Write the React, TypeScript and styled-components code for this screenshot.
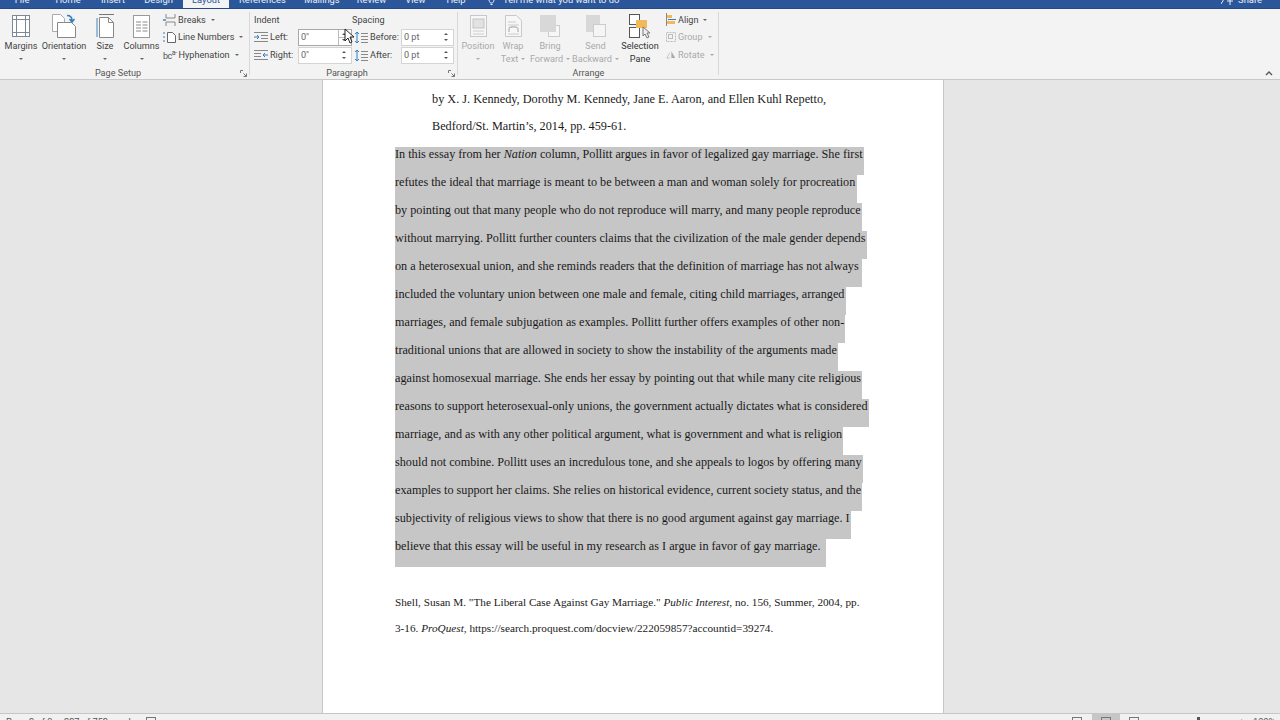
import React from "react";
import styled, { createGlobalStyle } from "styled-components";

const Global = createGlobalStyle`
  html, body { margin: 0; padding: 0; height: 100%; overflow: hidden; }
  #root { height: 100%; }
`;

const Shell = styled.div`
  display: flex;
  flex-direction: column;
  width: 1280px;
  height: 720px;
  overflow: hidden;
  position: relative;
  background: #e6e6e6;
  font-family: Roboto, "Liberation Sans", sans-serif;
`;

const TabBar = styled.div`
  display: flex;
  align-items: flex-start;
  flex: 0 0 9px;
  height: 9px;
  box-sizing: border-box;
  overflow: hidden;
  background: #2b579a;
  border-bottom: 1px solid #234a85;
  color: #e8eef7;
  font-size: 9.4px;
`;

const Tab = styled.div<{ $w: number; $active?: boolean }>`
  flex: 0 0 ${(p) => p.$w}px;
  width: ${(p) => p.$w}px;
  height: 9px;
  text-align: center;
  white-space: nowrap;
  line-height: 0;
  background: ${(p) => (p.$active ? "#f3f3f3" : "transparent")};
  color: ${(p) => (p.$active ? "#2b579a" : "#e8eef7")};
`;

const TellMe = styled.div`
  display: flex;
  gap: 8px;
  align-items: center;
  margin-left: 12px;
  height: 0;
  line-height: 0;
  white-space: nowrap;
`;

const Share = styled.div`
  margin-left: auto;
  margin-right: 18px;
  height: 0;
  line-height: 0;
  display: flex;
  gap: 3px;
  align-items: center;
`;

const Ribbon = styled.div`
  display: flex;
  flex: 0 0 71px;
  height: 71px;
  box-sizing: border-box;
  background: #f3f3f3;
  border-bottom: 1px solid #c8c8c8;
  position: relative;
  color: #444;
  font-size: 9.1px;
`;

const Group = styled.div<{ $w: number }>`
  flex: 0 0 ${(p) => p.$w}px;
  width: ${(p) => p.$w}px;
  box-sizing: border-box;
  height: 70px;
  display: flex;
  flex-direction: column;
  position: relative;
  &::after {
    content: "";
    position: absolute;
    top: 3px;
    bottom: 4px;
    right: 0;
    width: 1px;
    background: #d8d8d8;
  }
`;

const GroupBody = styled.div`
  flex: 1;
  display: flex;
  min-height: 0;
`;

const GroupLabel = styled.div<{ $pad?: number }>`
  flex: 0 0 12px;
  line-height: 12px;
  text-align: center;
  padding-right: ${(p) => p.$pad ?? 0}px;
  color: #555;
`;

const Launcher = styled.svg`
  position: absolute;
  right: 3px;
  bottom: 2px;
  width: 7px;
  height: 7px;
`;

const BigBtn = styled.div<{ $w: number; $off?: boolean; $dark?: boolean }>`
  flex: 0 0 ${(p) => p.$w}px;
  width: ${(p) => p.$w}px;
  display: flex;
  flex-direction: column;
  align-items: center;
  padding-top: 5px;
  box-sizing: border-box;
  line-height: 12.5px;
  white-space: nowrap;
  color: ${(p) => (p.$off ? "#aaa" : p.$dark ? "#333" : "#444")};
`;

const BigIcon = styled.div<{ $top?: number }>`
  height: 26px;
  box-sizing: border-box;
  padding-top: ${(p) => p.$top ?? 0}px;
  display: flex;
  align-items: flex-start;
`;

const Caret = styled.span<{ $off?: boolean }>`
  display: inline-block;
  width: 0;
  height: 0;
  border-left: 2px solid transparent;
  border-right: 2px solid transparent;
  border-top: 2px solid ${(p) => (p.$off ? "#aaa" : "#666")};
  vertical-align: middle;
  margin-left: 3px;
`;

const CaretRow = styled.div`
  height: 12px;
  display: flex;
  align-items: center;
  justify-content: center;
  & > span { margin-left: 0; }
`;

const SmallCol = styled.div<{ $pad: number }>`
  display: flex;
  flex-direction: column;
  padding: 2px 0 0 ${(p) => p.$pad}px;
`;

const SmallBtn = styled.div<{ $off?: boolean }>`
  display: flex;
  align-items: center;
  gap: 2px;
  height: 17.5px;
  white-space: nowrap;
  color: ${(p) => (p.$off ? "#aaa" : "#444")};
`;

const ParaBody = styled.div`
  flex: 1;
  display: grid;
  grid-template-columns: 98px 105px;
  grid-template-rows: 17px 18px 18px;
  padding: 2px 0 0 4px;
  align-items: center;
`;

const ParaHead = styled.div`
  color: #444;
`;

const ParaRow = styled.div<{ $labelW: number; $pad?: number }>`
  display: grid;
  grid-template-columns: 14px ${(p) => p.$labelW}px 1fr;
  column-gap: 2px;
  align-items: center;
  height: 18px;
  padding-left: ${(p) => p.$pad ?? 0}px;
`;

const Spin = styled.div<{ $w: number; $focus?: boolean }>`
  width: ${(p) => p.$w}px;
  height: 17px;
  box-sizing: border-box;
  border: 1px solid ${(p) => (p.$focus ? "#a8a8a8" : "#d4d4d4")};
  background: #fff;
  display: flex;
  align-items: center;
  justify-content: space-between;
  padding-left: 2px;
  padding-right: 2px;
  font-size: 9.1px;
  color: #666;
`;

const SpinArrows = styled.div<{ $focus?: boolean }>`
  width: 11px;
  height: 100%;
  display: flex;
  flex-direction: column;
  align-items: center;
  justify-content: space-around;
  padding: 2px 0;
  box-sizing: border-box;
  ${(p) => (p.$focus ? "border-left: 1px solid #bbb; background: linear-gradient(#fff 47%, #bbb 47%, #bbb 53%, #fff 53%);" : "")}
`;

const Arrow = styled.span<{ $up?: boolean }>`
  width: 0;
  height: 0;
  border-left: 2px solid transparent;
  border-right: 2px solid transparent;
  ${(p) => (p.$up ? "border-bottom" : "border-top")}: 2px solid #555;
`;

const Collapse = styled.svg`
  position: absolute;
  right: 7px;
  bottom: 3px;
  width: 8px;
  height: 6px;
`;

const Workspace = styled.div`
  flex: 1;
  display: flex;
  padding-left: 322px;
  min-height: 0;
  background: #e6e6e6;
`;

const Page = styled.div`
  width: 622px;
  box-sizing: border-box;
  background: #fff;
  border-left: 1px solid #c6c6c6;
  border-right: 1px solid #c6c6c6;
  padding: 5px 0 0 72px;
  font-family: "Liberation Serif", "Times New Roman", serif;
  color: #1a1a1a;
`;

const RefLine = styled.div<{ $indent?: boolean; $h?: number; $size: number }>`
  height: ${(p) => p.$h ?? 28}px;
  line-height: ${(p) => p.$h ?? 28}px;
  font-size: ${(p) => p.$size}px;
  white-space: nowrap;
  padding-left: ${(p) => (p.$indent ? 37 : 0)}px;
`;

const Selection = styled.div`
  display: flex;
  flex-direction: column;
  align-items: flex-start;
  margin: 7px 0 22px;
  font-size: 12.2px;
`;

const SelLine = styled.div<{ $w: number }>`
  width: ${(p) => p.$w}px;
  height: 28px;
  line-height: 15px;
  background: #c6c6c6;
  white-space: nowrap;
`;

const StatusBar = styled.div`
  flex: 0 0 7px;
  height: 7px;
  box-sizing: border-box;
  overflow: hidden;
  background: #f1f1f1;
  border-top: 1px solid #c6c6c6;
  display: flex;
  align-items: flex-start;
  font-size: 9.2px;
  line-height: 12px;
  color: #555;
  padding-left: 6px;
  white-space: nowrap;
`;

const StatusText = styled.span<{ $w: number }>`
  flex: 0 0 ${(p) => p.$w}px;
  margin-top: 2px;
`;

const StatusIcon = styled.span<{ $w: number; $active?: boolean }>`
  flex: 0 0 ${(p) => p.$w}px;
  height: 6px;
  display: flex;
  justify-content: center;
  background: ${(p) => (p.$active ? "#c6c6c6" : "transparent")};
  &::before {
    content: "";
    width: 10px;
    height: 8px;
    margin-top: 3px;
    box-sizing: border-box;
    border: 1px solid #777;
  }
`;

const Thumb = styled.span`
  flex: 0 0 3px;
  height: 6px;
  margin-top: 3px;
  background: #555;
`;

const Spacer = styled.span<{ $w: number }>`
  flex: 0 0 ${(p) => p.$w}px;
`;

const Cursor = styled.svg`
  position: absolute;
  left: 344px;
  top: 28px;
  width: 11px;
  height: 17px;
`;

const G = "#7d8a96";

const MarginsIcon = () => (
  <svg width="18" height="23" viewBox="0 0 18 23" fill="none" stroke={G}>
    <rect x=".5" y=".5" width="17" height="21" fill="#fff" />
    <path d="M4.5 .5v21M13.5 .5v21M.5 4.500h17M.5 17.500h17" />
  </svg>
);

const OrientationIcon = () => (
  <svg width="24" height="24" viewBox="0 0 24 24" fill="none">
    <path d="M.5 .5h8l4 4v13H.5z" fill="#fff" stroke="#aaa" />
    <path d="M5.500 8.500h14l4 4v11h-18z" fill="#fff" stroke="#888" />
    <path d="M15 1.500c4 0 5 2 5 5M17.500 5l2.500 3 2.500-3" stroke="#2f7fc1" strokeWidth="1.600" />
  </svg>
);

const SizeIcon = () => (
  <svg width="19" height="24" viewBox="0 0 19 24" fill="none">
    <path d="M3 .5h15" stroke="#777" />
    <path d="M1 4v19" stroke="#6fa6d0" strokeWidth="1.400" />
    <path d="M3.500 3.500h9l5 5v15h-14z" fill="#fff" stroke="#888" />
    <path d="M12.500 3.500v5h5" stroke="#888" />
  </svg>
);

const ColumnsIcon = () => (
  <svg width="17" height="23" viewBox="0 0 17 23" fill="none">
    <rect x=".5" y=".5" width="16" height="22" fill="#fff" stroke="#999" />
    <path d="M3 7h5M9.500 7h5M3 10h5M9.500 10h5M3 13h5M9.500 13h5M3 16h5M9.500 16h5" stroke="#8a8a8a" />
  </svg>
);

const BreaksIcon = () => (
  <svg width="13" height="12" viewBox="0 0 13 12" fill="none">
    <path d="M3 0v4h9V0M3 12V8h9v4" stroke="#888" />
    <path d="M0 6h3" stroke="#2f7fc1" strokeWidth="1.400" />
  </svg>
);

const LineNumIcon = () => (
  <svg width="13" height="12" viewBox="0 0 13 12" fill="none">
    <path d="M1 1v2M1 5v2M1 9v2" stroke="#2f7fc1" />
    <path d="M4.500 1.500h5l3 3v7h-8z" fill="#fff" stroke="#666" />
  </svg>
);

const HyphenGlyph = styled.span`
  flex: 0 0 13px;
  font-size: 9px;
  line-height: 9px;
  color: #555;
  letter-spacing: -0.5px;
  margin-top: 3px;
  & sup {
    font-size: 7px;
    line-height: 0;
    vertical-align: 4px;
  }
`;

const IndentIcon = ({ flip }: { flip?: boolean }) => (
  <svg width="14" height="10" viewBox="0 0 14 10" fill="none">
    <g transform={flip ? "matrix(-1 0 0 1 14 0)" : undefined}>
      <path d="M0 5h5M3 3l2 2-2 2" stroke="#2f7fc1" />
      <path d="M0 .5h14M7 3.500h7M7 6.500h7M0 9.500h14" stroke="#888" />
    </g>
  </svg>
);

const SpacingIcon = () => (
  <svg width="14" height="13" viewBox="0 0 14 13" fill="none">
    <path d="M3 1v11M1 3l2-2 2 2M1 10l2 2 2-2" stroke="#2f7fc1" />
    <path d="M7 2.500h7M7 5.500h7M7 8.500h7M7 11.500h7" stroke="#888" />
  </svg>
);

const PositionIcon = () => (
  <svg width="17" height="23" viewBox="0 0 17 23" fill="none">
    <rect x=".5" y=".5" width="16" height="21" fill="#f7f7f7" stroke="#c8c8c8" />
    <rect x="3" y="4" width="11" height="9" fill="#e2e2e2" stroke="#c4c4c4" />
    <path d="M3 16h11M3 19h11" stroke="#ccc" />
  </svg>
);

const WrapIcon = () => (
  <svg width="17" height="23" viewBox="0 0 17 23" fill="none">
    <path d="M.5.5h11l5 5v16H.5z" fill="#f7f7f7" stroke="#c8c8c8" />
    <path d="M3 7h8M3 10h11M3 19h11" stroke="#ccc" />
    <path d="M4 17v-3c0-3 9-3 9 0v3" stroke="#bbb" strokeWidth="1.400" />
  </svg>
);

const ForwardIcon = () => (
  <svg width="20" height="23" viewBox="0 0 20 23" fill="none">
    <rect x="8.500" y="10.500" width="11" height="11" fill="#f7f7f7" stroke="#ccc" />
    <rect x="0" y="0" width="16" height="17" fill="#d8d8d8" />
  </svg>
);

const BackwardIcon = () => (
  <svg width="20" height="23" viewBox="0 0 20 23" fill="none">
    <rect x="0" y="0" width="14" height="17" fill="#d8d8d8" />
    <rect x="7.500" y="9.500" width="12" height="12" fill="#f5f5f5" stroke="#ccc" />
  </svg>
);

const SelectionIcon = () => (
  <svg width="22" height="26" viewBox="0 0 22 26" fill="none">
    <rect x=".5" y=".5" width="10" height="10" fill="#fff" stroke="#555" />
    <rect x=".5" y="13.500" width="10" height="10" fill="#fff" stroke="#555" />
    <rect x="7" y="6" width="11" height="8" fill="#f0b95a" />
    <path d="M14 13v9l2-2 2 4 2-1-2-4h3z" fill="#eee" stroke="#777" />
  </svg>
);

const AlignIcon = () => (
  <svg width="10" height="13" viewBox="0 0 10 13" fill="none">
    <path d="M.5 0v13" stroke="#888" />
    <rect x="1" y="2" width="5" height="3" fill="#f0b95a" />
    <rect x="1" y="8" width="8" height="3" fill="#f0b95a" />
    <path d="M2 6.500h8" stroke="#2f7fc1" />
  </svg>
);

const GroupIcon = () => (
  <svg width="10" height="12" viewBox="0 0 10 12" fill="none" stroke="#bbb">
    <rect x=".5" y="1.500" width="9" height="9" strokeDasharray="2 1" />
    <rect x="2.500" y="3.500" width="4" height="4" />
  </svg>
);

const RotateIcon = () => (
  <svg width="10" height="10" viewBox="0 0 13 10">
    <path d="M7 0l5 9H7z" fill="#aaa" />
    <path d="M5 2L1 9h4" fill="none" stroke="#bbb" />
  </svg>
);

const BulbIcon = () => (
  <svg width="7" height="9" viewBox="0 0 7 9" fill="none" stroke="#e8eef7">
    <path d="M1 4c0 1.500 1 2 1.500 3h2C5 6 6 5.500 6 4M2.500 8.500h2" />
  </svg>
);

const ShareIcon = () => (
  <svg width="14" height="9" viewBox="0 0 14 9" fill="none" stroke="#e8eef7">
    <path d="M0 8l3-5M9 2v7M6 5h6" />
  </svg>
);

const LauncherMark = () => (
  <Launcher viewBox="0 0 7 7" fill="none" stroke="#777">
    <path d="M.5 3V.5H3M6.500 6.500l-3-3M6.500 3.500v3h-3" />
  </Launcher>
);

const Spinner = ({ value, w, focus }: { value: string; w: number; focus?: boolean }) => (
  <Spin $w={w} $focus={focus}>
    {value}
    <SpinArrows $focus={focus}>
      <Arrow $up />
      <Arrow />
    </SpinArrows>
  </Spin>
);

const selected: [React.ReactNode, number][] = [
  [<>In this essay from her <i>Nation</i> column, Pollitt argues in favor of legalized gay marriage. She first</>, 469],
  ["refutes the ideal that marriage is meant to be between a man and woman solely for procreation", 462],
  ["by pointing out that many people who do not reproduce will marry, and many people reproduce", 467],
  ["without marrying. Pollitt further counters claims that the civilization of the male gender depends", 472],
  ["on a heterosexual union, and she reminds readers that the definition of marriage has not always", 467],
  ["included the voluntary union between one male and female, citing child marriages, arranged", 451],
  ["marriages, and female subjugation as examples. Pollitt further offers examples of other non-", 450],
  ["traditional unions that are allowed in society to show the instability of the arguments made", 443],
  ["against homosexual marriage. She ends her essay by pointing out that while many cite religious", 467],
  ["reasons to support heterosexual-only unions, the government actually dictates what is considered", 474],
  ["marriage, and as with any other political argument, what is government and what is religion", 448],
  ["should not combine. Pollitt uses an incredulous tone, and she appeals to logos by offering many", 468],
  ["examples to support her claims. She relies on historical evidence, current society status, and the", 467],
  ["subjectivity of religious views to show that there is no good argument against gay marriage. I", 456],
  ["believe that this essay will be useful in my research as I argue in favor of gay marriage.", 431],
];

const tabs: [string, number, boolean?][] = [
  ["File", 44],
  ["Home", 48],
  ["Insert", 42],
  ["Design", 49],
  ["Layout", 46, true],
  ["References", 67],
  ["Mailings", 52],
  ["Review", 47],
  ["View", 41],
  ["Help", 40],
];

export default function App() {
  return (
    <Shell>
      <Global />
      <TabBar>
        {tabs.map(([t, w, a]) => (
          <Tab key={t} $w={w} $active={a}>
            {t}
          </Tab>
        ))}
        <TellMe>
          <BulbIcon />
          Tell me what you want to do
        </TellMe>
        <Share>
          <ShareIcon /> Share
        </Share>
      </TabBar>

      <Ribbon>
        <Group $w={250}>
          <GroupBody>
            <BigBtn $w={42}>
              <BigIcon $top={1}><MarginsIcon /></BigIcon>
              Margins
              <CaretRow><Caret /></CaretRow>
            </BigBtn>
            <BigBtn $w={44}>
              <BigIcon><OrientationIcon /></BigIcon>
              Orientation
              <CaretRow><Caret /></CaretRow>
            </BigBtn>
            <BigBtn $w={38}>
              <BigIcon><SizeIcon /></BigIcon>
              Size
              <CaretRow><Caret /></CaretRow>
            </BigBtn>
            <BigBtn $w={35}>
              <BigIcon $top={1}><ColumnsIcon /></BigIcon>
              Columns
              <CaretRow><Caret /></CaretRow>
            </BigBtn>
            <SmallCol $pad={4}>
              <SmallBtn><BreaksIcon />Breaks<Caret /></SmallBtn>
              <SmallBtn><LineNumIcon />Line Numbers<Caret /></SmallBtn>
              <SmallBtn><HyphenGlyph>bc<sup>a-</sup></HyphenGlyph>Hyphenation<Caret /></SmallBtn>
            </SmallCol>
          </GroupBody>
          <GroupLabel $pad={14}>Page Setup</GroupLabel>
          <LauncherMark />
        </Group>

        <Group $w={208}>
          <ParaBody>
            <ParaHead>Indent</ParaHead>
            <ParaHead>Spacing</ParaHead>
            <ParaRow $labelW={26}>
              <IndentIcon />
              Left:
              <Spinner value={'0"'} w={54} focus />
            </ParaRow>
            <ParaRow $labelW={29} $pad={2}>
              <SpacingIcon />
              Before:
              <Spinner value="0 pt" w={53} />
            </ParaRow>
            <ParaRow $labelW={26}>
              <IndentIcon flip />
              Right:
              <Spinner value={'0"'} w={54} />
            </ParaRow>
            <ParaRow $labelW={29} $pad={2}>
              <SpacingIcon />
              After:
              <Spinner value="0 pt" w={53} />
            </ParaRow>
          </ParaBody>
          <GroupLabel $pad={14}>Paragraph</GroupLabel>
          <LauncherMark />
        </Group>

        <Group $w={261}>
          <GroupBody>
            <BigBtn $w={40} $off>
              <BigIcon $top={1}><PositionIcon /></BigIcon>
              Position
              <CaretRow><Caret $off /></CaretRow>
            </BigBtn>
            <BigBtn $w={30} $off>
              <BigIcon $top={1}><WrapIcon /></BigIcon>
              Wrap
              <span>Text<Caret $off /></span>
            </BigBtn>
            <BigBtn $w={44} $off>
              <BigIcon $top={1}><ForwardIcon /></BigIcon>
              Bring
              <span>Forward<Caret $off /></span>
            </BigBtn>
            <BigBtn $w={47} $off>
              <BigIcon $top={1}><BackwardIcon /></BigIcon>
              Send
              <span>Backward<Caret $off /></span>
            </BigBtn>
            <BigBtn $w={42} $dark>
              <BigIcon><SelectionIcon /></BigIcon>
              Selection
              <span>Pane</span>
            </BigBtn>
            <SmallCol $pad={5}>
              <SmallBtn><AlignIcon />Align<Caret /></SmallBtn>
              <SmallBtn $off><GroupIcon />Group<Caret $off /></SmallBtn>
              <SmallBtn $off><RotateIcon />Rotate<Caret $off /></SmallBtn>
            </SmallCol>
          </GroupBody>
          <GroupLabel>Arrange</GroupLabel>
        </Group>

        <Collapse viewBox="0 0 8 6" fill="none" stroke="#555" strokeWidth="1.400">
          <path d="M1 5l3-3 3 3" />
        </Collapse>
      </Ribbon>

      <Workspace>
        <Page>
          <RefLine $indent $size={12.25}>by X. J. Kennedy, Dorothy M. Kennedy, Jane E. Aaron, and Ellen Kuhl Repetto,</RefLine>
          <RefLine $indent $h={27} $size={12.25}>Bedford/St. Martin’s, 2014, pp. 459-61.</RefLine>
          <Selection>
            {selected.map(([t, w], i) => (
              <SelLine key={i} $w={w}>
                {t}
              </SelLine>
            ))}
          </Selection>
          <RefLine $h={26} $size={11.23}>
            Shell, Susan M. "The Liberal Case Against Gay Marriage." <i>Public Interest</i>, no. 156, Summer, 2004, pp.
          </RefLine>
          <RefLine $h={26} $size={11.23}>
            3-16. <i>ProQuest</i>, https://search.proquest.com/docview/222059857?accountid=39274.
          </RefLine>
        </Page>
      </Workspace>

      <StatusBar>
        <StatusText $w={58}>Page 2 of 3</StatusText>
        <StatusText $w={81}>227 of 752 words</StatusText>
        <StatusIcon $w={11} />
        <Spacer $w={907} />
        <StatusIcon $w={27} />
        <Spacer $w={2} />
        <StatusIcon $w={28} $active />
        <StatusIcon $w={28} />
        <Spacer $w={49} />
        <Thumb />
        <Spacer $w={39} />
        <StatusText $w={14}>+</StatusText>
        <StatusText $w={24}>100%</StatusText>
      </StatusBar>

      <Cursor viewBox="0 0 11 17">
        <path d="M1 1v12l3-3 2 5 2-1-2-5h4z" fill="#fff" stroke="#222" />
      </Cursor>
    </Shell>
  );
}
